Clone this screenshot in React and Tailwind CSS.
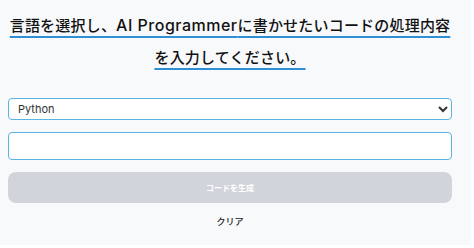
import React, { useState } from 'react';

export default function App() {
    const [lang, setLang] = useState('Python');
    const [prompt, setPrompt] = useState('');

    return (
        <div className="w-[474px] h-[248px] bg-white" style={{ fontFamily: 'Inter, "Noto Sans CJK JP", sans-serif' }}>
            <div className="w-[471px] h-[245px] bg-[#f8f9fb] pl-2 pr-[19px] pt-[9px] flex flex-col">
                {/* HEADING */}
                <h1 className="text-center text-[15px] leading-[32px] font-medium text-[#111] tracking-[0.2px]">
                    <span className="underline decoration-[#2e8fd4] decoration-2 underline-offset-[5px]">
                        言語を選択し、<span className="text-[16px] tracking-[0.5px]">AI Programmer</span>に書かせたいコードの処理内容を入力してください。
                    </span>
                </h1>

                {/* FORM */}
                <select
                    value={lang}
                    onChange={e => setLang(e.target.value)}
                    className="mt-[24px] h-[22px] w-full rounded-[4px] border-[1.5px] border-[#5ab4e2] bg-white px-[5px] text-[11px] text-[#333] outline-none"
                >
                    <option>Python</option>
                    <option>JavaScript</option>
                    <option>Java</option>
                </select>

                <input
                    value={prompt}
                    onChange={e => setPrompt(e.target.value)}
                    className="mt-[12px] h-[28px] w-full rounded-[4px] border-[1.5px] border-[#5ab4e2] bg-white px-2 text-[11px] outline-none"
                />

                <button
                    disabled
                    className="mt-[12px] h-[31px] w-full rounded-[8px] bg-[#d1d5db] text-[8px] font-bold text-white"
                >
                    コードを生成
                </button>

                <button className="mt-[12px] self-center text-[9px] font-medium text-[#222]">
                    クリア
                </button>
            </div>
        </div>
    );
}
